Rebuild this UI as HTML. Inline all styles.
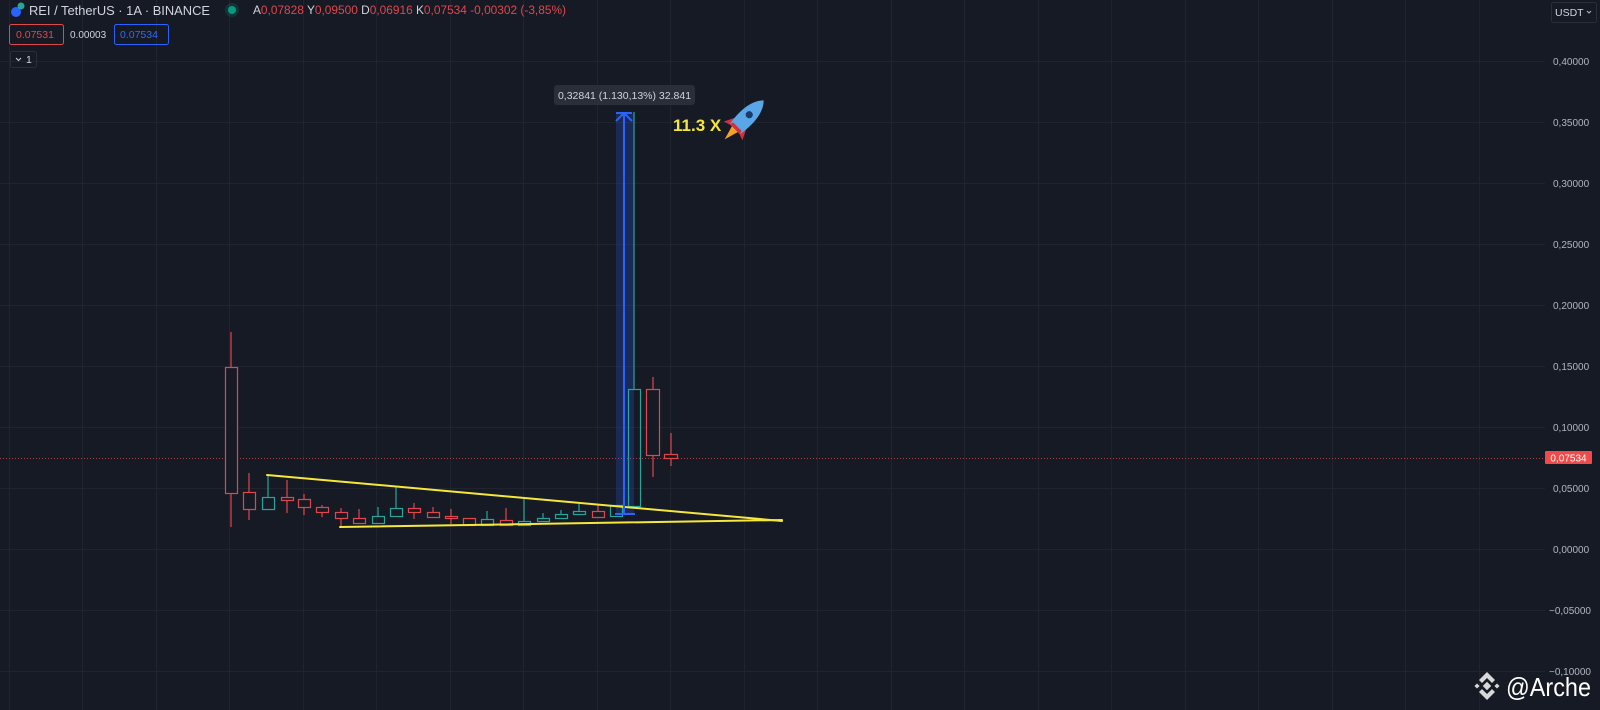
<!DOCTYPE html>
<html><head><meta charset="utf-8"><style>
html,body{margin:0;padding:0;background:#161a25;width:1600px;height:710px;overflow:hidden;font-family:"Liberation Sans",sans-serif}
.abs{position:absolute}
</style></head><body>
<svg class="abs" style="left:0;top:0" width="1600" height="710" xmlns="http://www.w3.org/2000/svg">
<g stroke="#20242f" stroke-width="1">
<line x1="9.5" y1="0" x2="9.5" y2="710"/><line x1="82.5" y1="0" x2="82.5" y2="710"/><line x1="156.5" y1="0" x2="156.5" y2="710"/><line x1="229.5" y1="0" x2="229.5" y2="710"/><line x1="303.5" y1="0" x2="303.5" y2="710"/><line x1="376.5" y1="0" x2="376.5" y2="710"/><line x1="450.5" y1="0" x2="450.5" y2="710"/><line x1="523.5" y1="0" x2="523.5" y2="710"/><line x1="597.5" y1="0" x2="597.5" y2="710"/><line x1="670.5" y1="0" x2="670.5" y2="710"/><line x1="744.5" y1="0" x2="744.5" y2="710"/><line x1="817.5" y1="0" x2="817.5" y2="710"/><line x1="891.5" y1="0" x2="891.5" y2="710"/><line x1="964.5" y1="0" x2="964.5" y2="710"/><line x1="1038.5" y1="0" x2="1038.5" y2="710"/><line x1="1111.5" y1="0" x2="1111.5" y2="710"/><line x1="1185.5" y1="0" x2="1185.5" y2="710"/><line x1="1258.5" y1="0" x2="1258.5" y2="710"/><line x1="1332.5" y1="0" x2="1332.5" y2="710"/><line x1="1405.5" y1="0" x2="1405.5" y2="710"/><line x1="1479.5" y1="0" x2="1479.5" y2="710"/>
<line x1="0" y1="61.5" x2="1545" y2="61.5"/><line x1="0" y1="122.5" x2="1545" y2="122.5"/><line x1="0" y1="183.5" x2="1545" y2="183.5"/><line x1="0" y1="244.5" x2="1545" y2="244.5"/><line x1="0" y1="305.5" x2="1545" y2="305.5"/><line x1="0" y1="366.5" x2="1545" y2="366.5"/><line x1="0" y1="427.5" x2="1545" y2="427.5"/><line x1="0" y1="488.5" x2="1545" y2="488.5"/><line x1="0" y1="549.5" x2="1545" y2="549.5"/><line x1="0" y1="610.5" x2="1545" y2="610.5"/><line x1="0" y1="671.5" x2="1545" y2="671.5"/>
</g>
<line x1="0" y1="458.5" x2="1545" y2="458.5" stroke="#e0474c" stroke-width="1" stroke-dasharray="1,2" opacity="0.8"/>
<rect x="616" y="113" width="18" height="401" fill="#2962ff" opacity="0.22"/>
<g fill="none" stroke-width="1.2">
<g stroke="#e0474c">
<line x1="231" y1="332" x2="231" y2="527"/><rect x="225.5" y="367.5" width="12" height="126" fill="#161a25"/>
<line x1="249" y1="473" x2="249" y2="520"/><rect x="243.5" y="492.5" width="12" height="17" fill="#161a25"/>
<line x1="287" y1="480" x2="287" y2="513"/><rect x="281.5" y="497.5" width="12" height="3" fill="#161a25"/>
<line x1="304" y1="494" x2="304" y2="515"/><rect x="298.5" y="499.5" width="12" height="8" fill="#161a25"/>
<line x1="322" y1="505" x2="322" y2="517"/><rect x="316.5" y="507.5" width="12" height="5" fill="#161a25"/>
<line x1="341" y1="508" x2="341" y2="527"/><rect x="335.5" y="512.5" width="12" height="6" fill="#161a25"/>
<line x1="359" y1="509" x2="359" y2="524"/><rect x="353.5" y="518.5" width="12" height="5" fill="#161a25"/>
<line x1="414" y1="503" x2="414" y2="519"/><rect x="408.5" y="508.5" width="12" height="4" fill="#161a25"/>
<line x1="433" y1="507" x2="433" y2="518"/><rect x="427.5" y="512.5" width="12" height="5" fill="#161a25"/>
<line x1="451" y1="509" x2="451" y2="524"/><rect x="445.5" y="516.5" width="12" height="2" fill="#161a25"/>
<rect x="463.5" y="518.5" width="12" height="7" fill="#161a25"/>
<line x1="506" y1="508" x2="506" y2="520"/><rect x="500.5" y="520.5" width="12" height="5" fill="#161a25"/>
<line x1="598" y1="504" x2="598" y2="511"/><rect x="592.5" y="511.5" width="12" height="6" fill="#161a25"/>
<line x1="653" y1="377" x2="653" y2="477"/><rect x="646.5" y="389.5" width="13" height="66" fill="#161a25"/>
<line x1="671" y1="433" x2="671" y2="466"/><rect x="664.5" y="454.5" width="13" height="4" fill="#161a25"/>
</g>
<g stroke="#26a69a">
<line x1="268" y1="475" x2="268" y2="498"/><rect x="262.5" y="497.5" width="12" height="12"/>
<line x1="378" y1="507" x2="378" y2="516"/><rect x="372.5" y="516.5" width="12" height="7"/>
<line x1="396" y1="487" x2="396" y2="508"/><rect x="390.5" y="508.5" width="12" height="8"/>
<line x1="487" y1="511" x2="487" y2="519"/><rect x="481.5" y="519.5" width="12" height="6"/>
<line x1="524" y1="499" x2="524" y2="521"/><rect x="518.5" y="521.5" width="12" height="4"/>
<line x1="543" y1="513" x2="543" y2="518"/><rect x="537.5" y="518.5" width="12" height="3"/>
<line x1="561" y1="510" x2="561" y2="514"/><rect x="555.5" y="514.5" width="12" height="4"/>
<line x1="579" y1="504" x2="579" y2="511"/><rect x="573.5" y="511.5" width="12" height="3"/>
<rect x="610.5" y="505.5" width="12" height="11"/>
<line x1="634" y1="112" x2="634" y2="389"/><rect x="628.5" y="389.5" width="12" height="117"/>
</g>
</g>
<g stroke="#f5e73b" stroke-width="2" stroke-linecap="round">
<line x1="267" y1="475" x2="782" y2="521"/>
<line x1="340" y1="527" x2="782" y2="520"/>
</g>
<g stroke="#2962ff" stroke-width="2" fill="none">
<line x1="624" y1="113" x2="624" y2="514"/>
<line x1="615" y1="514" x2="635" y2="514"/>
<polyline points="616,121 624,113 632,121"/>
<line x1="616" y1="113" x2="632" y2="113"/>
</g>
<rect x="554" y="85" width="141" height="20" rx="3" fill="#2a2e39"/>
<text x="624.5" y="99" font-size="10.5" fill="#d1d4dc" text-anchor="middle" font-family="Liberation Sans, sans-serif">0,32841 (1.130,13%) 32.841</text>
<text x="673" y="131" font-size="17" font-weight="bold" fill="#f5e73b" font-family="Liberation Sans, sans-serif">11.3 X</text>
<g transform="translate(745,119) rotate(45) scale(1.2)">
<path d="M-4,10 L0,24 L4,10 Z" fill="#f7a127"/>
<path d="M-6,4 L-11,14 L-5,12 Z M6,4 L11,14 L5,12 Z" fill="#d0323b"/>
<path d="M0,-22 C8,-14 8,0 6,12 L-6,12 C-8,0 -8,-14 0,-22 Z" fill="#5aa7e8"/>
<circle cx="0" cy="-5" r="3" fill="#1c3b6b"/>
<path d="M-6,12 L6,12 L5,9 L-5,9Z" fill="#d0323b"/>
</g>
<g font-size="10" fill="#b2b5be" font-family="Liberation Sans, sans-serif">
<text x="1553" y="65">0,40000</text><text x="1553" y="126">0,35000</text><text x="1553" y="187">0,30000</text><text x="1553" y="248">0,25000</text><text x="1553" y="309">0,20000</text><text x="1553" y="370">0,15000</text><text x="1553" y="431">0,10000</text><text x="1553" y="492">0,05000</text><text x="1553" y="553">0,00000</text><text x="1549" y="614">−0,05000</text><text x="1549" y="675">−0,10000</text>
</g>
<rect x="1545" y="451" width="47" height="13" rx="1" fill="#f04b4b"/>
<text x="1568.5" y="461.5" font-size="10" fill="#ffffff" text-anchor="middle" font-family="Liberation Sans, sans-serif">0,07534</text>
<rect x="1551.5" y="2.5" width="45" height="20" rx="2" fill="none" stroke="#2a2e39"/>
<text x="1555" y="16" font-size="10.5" fill="#d1d4dc" font-family="Liberation Sans, sans-serif">USDT</text>
<polyline points="1587,11 1589,13 1591,11" stroke="#b2b5be" fill="none" stroke-width="1"/>
<g fill="#d8d8d8" transform="translate(1487,686)">
<rect x="-3" y="-3" width="6" height="6" transform="rotate(45)"/>
<rect x="-3" y="-3" width="6" height="6" transform="translate(-10,0) rotate(45) scale(0.6)"/>
<rect x="-3" y="-3" width="6" height="6" transform="translate(10,0) rotate(45) scale(0.6)"/>
<path d="M0,-14 L8,-6 L5,-3 L0,-8 L-5,-3 L-8,-6 Z"/>
<path d="M0,14 L8,6 L5,3 L0,8 L-5,3 L-8,6 Z"/>
</g>
<text x="1506" y="696" font-size="26" fill="#ffffff" textLength="85" lengthAdjust="spacingAndGlyphs" font-family="Liberation Sans, sans-serif">@Arche</text>
<circle cx="16" cy="12" r="5" fill="#2962ff"/>
<circle cx="21" cy="6" r="3.5" fill="#26a69a"/>
<text x="29" y="15" font-size="13" fill="#d1d4dc" textLength="181" lengthAdjust="spacingAndGlyphs" font-family="Liberation Sans, sans-serif">REI / TetherUS · 1A · BINANCE</text>
<circle cx="232" cy="10" r="4" fill="#089981"/>
<circle cx="232" cy="10" r="7" fill="#089981" opacity="0.2"/>
<text x="253" y="14" font-size="11.5" textLength="313" lengthAdjust="spacingAndGlyphs" font-family="Liberation Sans, sans-serif"><tspan fill="#d1d4dc">A</tspan><tspan fill="#e0474c">0,07828 </tspan><tspan fill="#d1d4dc">Y</tspan><tspan fill="#e0474c">0,09500 </tspan><tspan fill="#d1d4dc">D</tspan><tspan fill="#e0474c">0,06916 </tspan><tspan fill="#d1d4dc">K</tspan><tspan fill="#e0474c">0,07534 -0,00302 (-3,85%)</tspan></text>
<rect x="9.5" y="24.5" width="54" height="20" rx="2" fill="none" stroke="#e0474c"/>
<text x="16" y="38" font-size="10.5" fill="#e0474c" font-family="Liberation Sans, sans-serif">0.07531</text>
<text x="70" y="38" font-size="10" fill="#d1d4dc" font-family="Liberation Sans, sans-serif">0.00003</text>
<rect x="114.5" y="24.5" width="54" height="20" rx="2" fill="none" stroke="#2962ff"/>
<text x="120" y="38" font-size="10.5" fill="#2f6bff" font-family="Liberation Sans, sans-serif">0.07534</text>
<rect x="10.5" y="51.5" width="26" height="16" rx="2" fill="none" stroke="#2a2e39"/>
<polyline points="16,58 18.5,60.5 21,58" stroke="#d1d4dc" fill="none" stroke-width="1"/>
<text x="26" y="63" font-size="10.5" fill="#d1d4dc" font-family="Liberation Sans, sans-serif">1</text>
</svg>
</body></html>
